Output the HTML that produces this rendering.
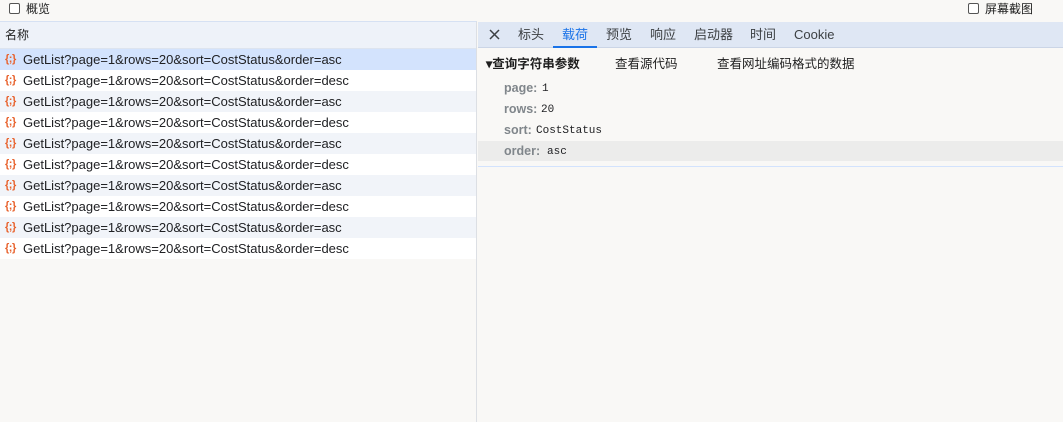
<!DOCTYPE html>
<html><head><meta charset="utf-8"><style>
*{margin:0;padding:0;box-sizing:border-box}
body{width:1063px;height:422px;background:#f9f8f6;font-family:"Liberation Sans","Noto Sans CJK SC",sans-serif;font-size:12px;color:#1f1f1f;position:relative;overflow:hidden}
.cb{position:absolute;width:11px;height:11px;border:1px solid #555;border-radius:2px;background:#fff}
.abs{position:absolute;white-space:nowrap;line-height:16px}
#left{position:absolute;left:0;top:21px;width:477px;height:401px;border-right:1px solid #dcdfe4;border-top:1px solid #d6e1f3}
.hdr{height:27px;background:#eef2f9;border-bottom:1px solid #dde4ef;padding:5px 0 0 5px;font-size:12px;line-height:16px}
.row{height:21px;line-height:21px;padding-left:23px;position:relative;font-size:13px;color:#202124;white-space:nowrap}
.row:nth-child(odd){background:#f1f4f9}.row:nth-child(even){background:#fff}
.row.sel{background:#d3e3fd}
.ic{position:absolute;left:5px;top:0;color:#e8622d;font-size:11px;font-weight:bold;letter-spacing:-0.5px}
#tabs{position:absolute;left:478px;top:22px;width:585px;height:26px;background:#dfe7f4;border-bottom:1px solid #cbd5e6}
.tab{position:absolute;top:4px;font-size:13px;line-height:17px;color:#3c4043;white-space:nowrap}
#right .k{position:absolute;left:504px;color:#80868b;font-weight:bold;font-size:12.5px;line-height:16px}
#right .v{position:absolute;font-family:"Liberation Mono",monospace;font-size:11px;line-height:16px;color:#202124}
</style></head><body>
<div class="cb" style="left:9px;top:3px"></div><div class="abs" style="left:26px;top:1px">概览</div>
<div class="cb" style="left:968px;top:3px"></div><div class="abs" style="left:985px;top:1px">屏幕截图</div>
<div id="left">
<div class="hdr">名称</div>
<div>
<div class="row sel"><span class="ic">{;}</span>GetList?page=1&amp;rows=20&amp;sort=CostStatus&amp;order=asc</div>
<div class="row"><span class="ic">{;}</span>GetList?page=1&amp;rows=20&amp;sort=CostStatus&amp;order=desc</div>
<div class="row"><span class="ic">{;}</span>GetList?page=1&amp;rows=20&amp;sort=CostStatus&amp;order=asc</div>
<div class="row"><span class="ic">{;}</span>GetList?page=1&amp;rows=20&amp;sort=CostStatus&amp;order=desc</div>
<div class="row"><span class="ic">{;}</span>GetList?page=1&amp;rows=20&amp;sort=CostStatus&amp;order=asc</div>
<div class="row"><span class="ic">{;}</span>GetList?page=1&amp;rows=20&amp;sort=CostStatus&amp;order=desc</div>
<div class="row"><span class="ic">{;}</span>GetList?page=1&amp;rows=20&amp;sort=CostStatus&amp;order=asc</div>
<div class="row"><span class="ic">{;}</span>GetList?page=1&amp;rows=20&amp;sort=CostStatus&amp;order=desc</div>
<div class="row"><span class="ic">{;}</span>GetList?page=1&amp;rows=20&amp;sort=CostStatus&amp;order=asc</div>
<div class="row"><span class="ic">{;}</span>GetList?page=1&amp;rows=20&amp;sort=CostStatus&amp;order=desc</div>
</div></div>
<div id="tabs">
<svg class="abs" style="left:11px;top:7px" width="11" height="11"><path d="M1 1L10 10M10 1L1 10" stroke="#3c4043" stroke-width="1.5"/></svg>
<span class="tab" style="left:40px">标头</span>
<span class="tab" style="left:84px;color:#1a73e8">载荷</span>
<div class="abs" style="left:75px;top:24px;width:44px;height:2px;background:#1a73e8"></div>
<span class="tab" style="left:128px">预览</span>
<span class="tab" style="left:172px">响应</span>
<span class="tab" style="left:216px">启动器</span>
<span class="tab" style="left:272px">时间</span>
<span class="tab" style="left:316px">Cookie</span>
</div>
<div id="right">
<div class="abs" style="left:486px;top:56px;font-weight:bold;font-size:12.5px">▾查询字符串参数</div>
<div class="abs" style="left:615px;top:56px;font-size:12.5px">查看源代码</div>
<div class="abs" style="left:717px;top:56px;font-size:12.5px">查看网址编码格式的数据</div>
<span class="k" style="top:80px">page:</span><span class="v" style="left:542px;top:81px">1</span>
<span class="k" style="top:101px">rows:</span><span class="v" style="left:541px;top:102px">20</span>
<span class="k" style="top:122px">sort:</span><span class="v" style="left:536px;top:123px">CostStatus</span>
<div class="abs" style="left:478px;top:141px;width:585px;height:20px;background:#ececeb"></div>
<span class="k" style="top:143px">order:</span><span class="v" style="left:547px;top:144px">asc</span>
<div class="abs" style="left:478px;top:166px;width:585px;height:1px;background:#d3e3fd"></div>
</div>
</body></html>
